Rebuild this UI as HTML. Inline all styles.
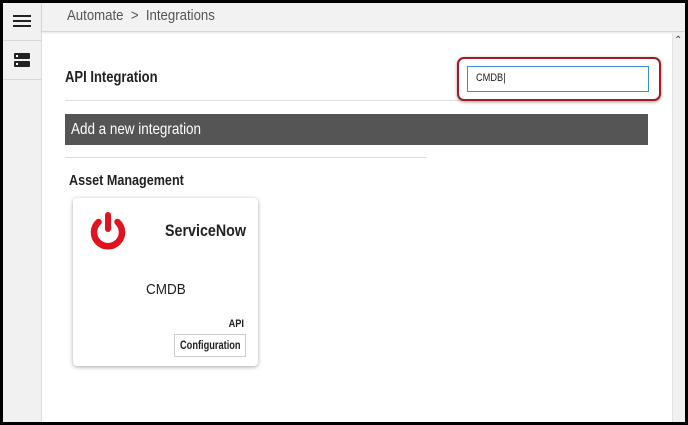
<!DOCTYPE html>
<html><head><style>
body{margin:0;width:688px;height:425px;overflow:hidden;background:#000;font-family:"Liberation Sans",sans-serif;}
.f{position:absolute;left:3px;top:3px;width:682px;height:419px;background:#fff;overflow:hidden}
.a{position:absolute}
.c{transform:scaleX(.84);transform-origin:left top;white-space:nowrap}
.r{transform:scaleX(.84);transform-origin:right top;white-space:nowrap}
</style></head><body><div class="f">
<div class="a" style="left:0;top:0;width:38px;height:419px;background:#f0f1f0;border-right:1px solid #dcdcdc"></div>
<div class="a" style="left:0;top:37px;width:38px;height:1px;background:#d8d8d8"></div>
<div class="a" style="left:0;top:76px;width:38px;height:1px;background:#d8d8d8"></div>
<div class="a" style="left:10px;top:12px;width:18px;height:2px;background:#222"></div>
<div class="a" style="left:10px;top:17px;width:18px;height:2px;background:#222"></div>
<div class="a" style="left:10px;top:22px;width:18px;height:2px;background:#222"></div>
<div class="a" style="left:11px;top:50px;width:16px;height:6px;background:#222;border-radius:1px"></div>
<div class="a" style="left:11px;top:58px;width:16px;height:6px;background:#222;border-radius:1px"></div>
<div class="a" style="left:13px;top:52px;width:2px;height:2px;background:#fff"></div>
<div class="a" style="left:13px;top:60px;width:2px;height:2px;background:#fff"></div>
<div class="a" style="left:39px;top:0;width:643px;height:28px;background:#f2f2f2;border-bottom:1px solid #d6d6d6;box-shadow:0 1px 2px rgba(0,0,0,.1)"></div>
<div class="a c" style="left:64px;top:4px;font-size:15px;color:#555;transform:scaleX(.88)">Automate &nbsp;&gt;&nbsp; Integrations</div>
<div class="a" style="left:669px;top:30px;width:13px;height:389px;background:#f1f1f1;border-left:1px solid #e3e3e3"></div>
<div class="a" style="left:671px;top:32px;font-size:10px;color:#444">&#8963;</div>
<div class="a c" style="left:62px;top:66px;font-size:15.5px;font-weight:bold;color:#222">API Integration</div>
<div class="a" style="left:62px;top:97px;width:583px;height:1px;background:#ddd"></div>
<div class="a" style="left:454px;top:54px;width:200px;height:40px;border:2px solid #a31a2a;border-radius:7px;background:#fff;box-shadow:0 1px 3px rgba(0,0,0,.4)"></div>
<div class="a" style="left:464px;top:63px;width:180px;height:24px;border:1px solid #3d8fd8;background:#fff"></div>
<div class="a c" style="left:473px;top:69px;font-size:11px;color:#222">CMDB|</div>
<div class="a" style="left:62px;top:111px;width:583px;height:31px;background:#555"></div>
<div class="a c" style="left:68px;top:118px;font-size:16px;color:#fff">Add a new integration</div>
<div class="a" style="left:62px;top:154px;width:362px;height:1px;background:#ddd"></div>
<div class="a c" style="left:66px;top:169px;font-size:15px;font-weight:bold;color:#222">Asset Management</div>
<div class="a" style="left:70px;top:195px;width:185px;height:168px;background:#fff;border-radius:4px;box-shadow:0 1px 4px rgba(0,0,0,.35)"></div>
<svg class="a" style="left:85px;top:207px" width="40" height="42" viewBox="0 0 40 42"><path d="M10.5 12 A14 14 0 1 0 29.5 12" fill="none" stroke="#e0141e" stroke-width="6.5" stroke-linecap="round"/><line x1="20" y1="5" x2="20" y2="19" stroke="#e0141e" stroke-width="6" stroke-linecap="round"/></svg>
<div class="a r" style="left:130px;top:218px;width:113px;text-align:right;font-size:17px;font-weight:bold;color:#222">ServiceNow</div>
<div class="a" style="left:143px;top:278px;font-size:15px;color:#222;transform:scaleX(.9);transform-origin:left top">CMDB</div>
<div class="a r" style="left:200px;top:315px;width:41px;text-align:right;font-size:11px;font-weight:bold;color:#222">API</div>
<div class="a" style="left:171px;top:331px;width:70px;height:21px;border:1px solid #ccc;background:#fff"></div>
<div class="a c" style="left:177px;top:335px;font-size:12px;font-weight:bold;color:#222;transform:scaleX(.77)">Configuration</div>
</div></body></html>
